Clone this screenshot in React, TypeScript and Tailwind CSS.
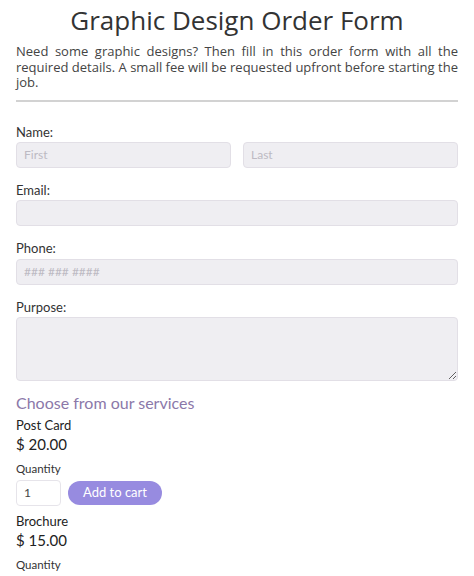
import { useState } from 'react'

const labelCls = 'block text-[13px] text-[#333] leading-4 mb-[2px]'
const fieldCls =
  'w-full h-[26px] rounded-[4px] border border-[#e2dfe6] bg-[#efeef2] px-[7px] text-[12px] text-[#444] placeholder:text-[#bdbac3] outline-none'

function Service({ name, price }: { name: string; price: string }) {
  const [qty, setQty] = useState('1')
  return (
    <div>
      <p className="text-[13px] text-[#222] leading-4">{name}</p>
      <p className="text-[15px] text-[#222] leading-5 mt-[1px]">{price}</p>
      <p className="text-[11.5px] text-[#333] leading-4 mt-[7px]">Quantity</p>
      <div className="flex items-center gap-[7px] mt-[3px]">
        <input
          value={qty}
          onChange={e => setQty(e.target.value)}
          className="w-[45px] h-[26px] rounded-[4px] border border-[#e6e4ea] bg-white px-[7px] text-[12px] text-[#444] outline-none"
        />
        <button className="h-[24px] w-[94px] rounded-full bg-[#978be0] text-white text-[13px] leading-none">
          Add to cart
        </button>
      </div>
    </div>
  )
}

export default function App() {
  return (
    <div className="min-h-screen bg-white px-4 pt-[4px] font-['Lato','Noto_Sans',sans-serif]">
      <h1 className="text-center text-[26px] text-[#333] leading-8 font-['Open_Sans',sans-serif]">
        Graphic Design Order Form
      </h1>
      <p className="mt-[8px] text-[13px] leading-[15.5px] text-[#444] text-justify font-['Open_Sans',sans-serif]">
        Need some graphic designs? Then fill in this order form with all the required details. A small fee will be
        requested upfront before starting the job.
      </p>
      <hr className="mt-[9px] border-0 h-[2px] bg-[#d2d2d2]" />

      <form className="mt-[22px]" onSubmit={e => e.preventDefault()}>
        <label className={labelCls}>Name:</label>
        <div className="grid grid-cols-2 gap-[12px]">
          <input className={fieldCls} placeholder="First" />
          <input className={fieldCls} placeholder="Last" />
        </div>

        <label className={`${labelCls} mt-[14px]`}>Email:</label>
        <input className={fieldCls} type="email" />

        <label className={`${labelCls} mt-[14px]`}>Phone:</label>
        <input className={fieldCls} placeholder="### ### ####" />

        <label className={`${labelCls} mt-[14px]`}>Purpose:</label>
        <textarea className={`${fieldCls} h-[64px] block py-[4px]`} />

        <h2 className="mt-[12px] text-[16px] leading-5 text-[#8b78a9]">Choose from our services</h2>
        <div className="mt-[4px] space-y-[7px]">
          <Service name="Post Card" price="$ 20.00" />
          <Service name="Brochure" price="$ 15.00" />
        </div>
      </form>
    </div>
  )
}
